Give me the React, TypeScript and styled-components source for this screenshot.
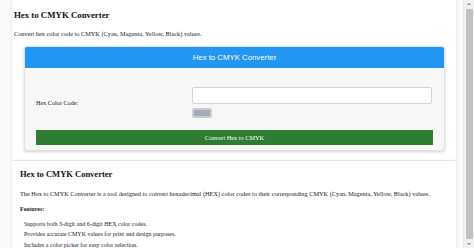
import React from "react";
import styled, { createGlobalStyle } from "styled-components";

const GlobalStyle = createGlobalStyle`
  html, body {
    margin: 0;
    height: 100%;
    overflow: hidden;
    background: #fafafa;
  }
  body {
    font-family: "Liberation Serif", "Times New Roman", serif;
    color: #222;
  }
`;

const Window = styled.div`
  display: flex;
  height: 248px;
  overflow: hidden;
`;

const Page = styled.div`
  flex: 1;
  display: flex;
  flex-direction: column;
  padding: 0 7px 0 12px;
  overflow: hidden;
`;

const ScrollTrack = styled.div`
  width: 11px;
  flex-shrink: 0;
  background: #f1f1f1;
  border-left: 1px solid #e8e8e8;
  display: flex;
  flex-direction: column;
  align-items: center;
  padding: 1px 0;
  box-sizing: border-box;
`;

const Arrow = styled.div<{ $down?: boolean }>`
  width: 0;
  height: 0;
  border-left: 2px solid transparent;
  border-right: 2px solid transparent;
  ${(p) => (p.$down ? "border-top: 2px solid #8a8a8a;" : "border-bottom: 2px solid #8a8a8a;")}
  margin: 2px 0;
`;

const Thumb = styled.div`
  flex: 1;
  width: 7px;
  margin: 2px 0;
  background: #c1c1c1;
  border-radius: 1px;
`;

const Section = styled.section`
  background: #fff;
  box-shadow: 0 0 3px rgba(0, 0, 0, 0.12);
  padding: 9.5px 2px 9px 2px;
`;

const InfoSection = styled(Section)`
  padding: 8px 8px 4px 8px;
  margin-top: 1px;
`;

const Title = styled.h1`
  margin: 0 0 10px 0;
  font-size: 8.8px;
  line-height: 10px;
  font-weight: 700;
  color: #111;
`;

const Text = styled.p<{ $gap?: number }>`
  margin: 0 0 ${(p) => p.$gap ?? 9.5}px 0;
  font-size: 6.3px;
  line-height: 7px;
`;

const Card = styled.div`
  margin: 0 9px 0 10px;
  background: #f7f7f7;
  border: 1px solid #e2e2e2;
  border-radius: 3px;
  box-shadow: 0 1px 3px rgba(0, 0, 0, 0.18);
  overflow: hidden;
`;

const CardHeader = styled.div`
  height: 21px;
  background: #2196f3;
  color: #fff;
  font-family: "Liberation Sans", Arial, sans-serif;
  font-size: 7.8px;
  display: flex;
  align-items: center;
  justify-content: center;
`;

const CardBody = styled.div`
  padding: 19px 10px 5px 11px;
  display: flex;
  flex-direction: column;
  gap: 12px;
`;

const FormRow = styled.div`
  display: grid;
  grid-template-columns: 156px 1fr;
  align-items: center;
  padding-right: 2px;
`;

const Label = styled.label`
  font-size: 6.2px;
`;

const Field = styled.div`
  display: flex;
  flex-direction: column;
  align-items: flex-start;
  gap: 4px;
`;

const Input = styled.div`
  width: 100%;
  box-sizing: border-box;
  height: 17px;
  background: #fff;
  border: 1px solid #d4d4d4;
  border-radius: 2px;
`;

const Swatch = styled.div`
  width: 20px;
  height: 10px;
  box-sizing: border-box;
  border: 2px solid #c9ccd1;
  border-radius: 2px;
  background: #a3abb9;
`;

const Button = styled.button`
  height: 15px;
  border: none;
  background: #2e7d32;
  color: #fff;
  font-family: "Liberation Serif", "Times New Roman", serif;
  font-size: 6.3px;
  padding: 0;
  margin-right: 1px;
`;

const SubTitle = styled.h2`
  margin: 0 0 10.5px 0;
  font-size: 8.5px;
  line-height: 10px;
  font-weight: 700;
  color: #111;
`;

const Strong = styled.p`
  margin: 0 0 8px 0;
  font-size: 6px;
  line-height: 7px;
  font-weight: 700;
`;

const List = styled.ul`
  list-style: none;
  margin: 0;
  padding: 0 0 0 4px;
  display: flex;
  flex-direction: column;
  gap: 3.5px;
`;

const Item = styled.li`
  font-size: 6px;
  line-height: 7px;
`;

export default function App() {
  return (
    <>
      <GlobalStyle />
      <Window>
        <Page>
          <Section>
            <Title>Hex to CMYK Converter</Title>
            <Text>Convert hex color code to CMYK (Cyan, Magenta, Yellow, Black) values.</Text>
            <Card>
              <CardHeader>Hex to CMYK Converter</CardHeader>
              <CardBody>
                <FormRow>
                  <Label>Hex Color Code:</Label>
                  <Field>
                    <Input />
                    <Swatch />
                  </Field>
                </FormRow>
                <Button>Convert Hex to CMYK</Button>
              </CardBody>
            </Card>
          </Section>
          <InfoSection>
            <SubTitle>Hex to CMYK Converter</SubTitle>
            <Text $gap={9}>
              The Hex to CMYK Converter is a tool designed to convert hexadecimal (HEX) color codes to
              their corresponding CMYK (Cyan, Magenta, Yellow, Black) values.
            </Text>
            <Strong>Features:</Strong>
            <List>
              <Item>Supports both 3-digit and 6-digit HEX color codes.</Item>
              <Item>Provides accurate CMYK values for print and design purposes.</Item>
              <Item>Includes a color picker for easy color selection.</Item>
            </List>
          </InfoSection>
        </Page>
        <ScrollTrack>
          <Arrow />
          <Thumb />
          <Arrow $down />
        </ScrollTrack>
      </Window>
    </>
  );
}
